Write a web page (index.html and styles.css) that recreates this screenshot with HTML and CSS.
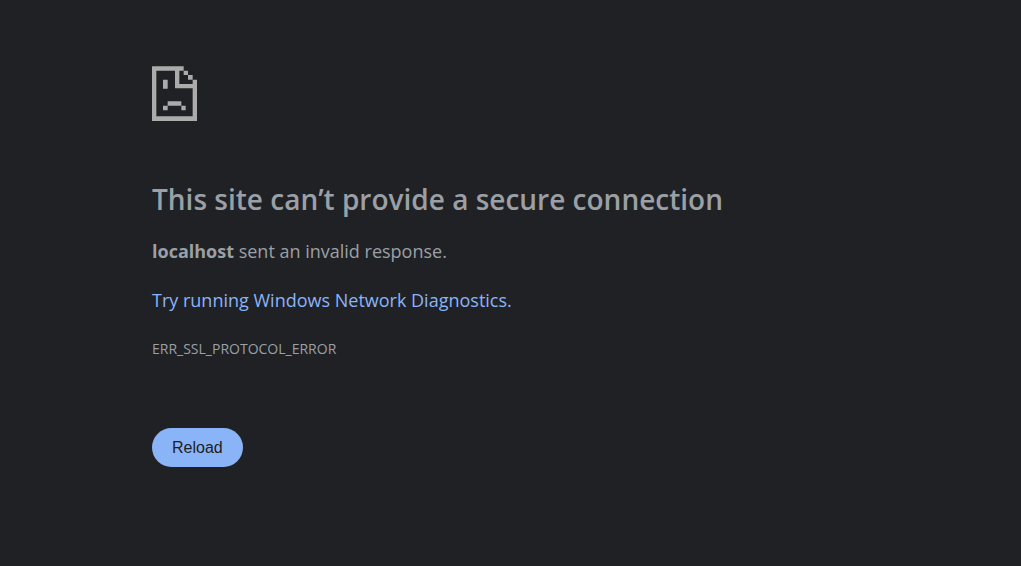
FILE: index.html
```html
<!DOCTYPE html>
<html lang="en">
<head>
    <meta charset="utf-8">
    <meta name="viewport" content="width=device-width, initial-scale=1">
    <title>localhost</title>
    <link rel="stylesheet" href="styles.css">
</head>
<body>
    <main class="error-page">
        <svg class="error-icon" viewBox="0 0 135 165" aria-hidden="true">
            <!-- page outline and folded corner -->
            <path d="M0 1H95V14H13V151H122V67H69V14H82V54H122V41H135V165H0Z"/>
            <path d="M95 14h13v13h-13zM108 27h14v14h-14z"/>
            <!-- face -->
            <path d="M33 41h14v27h-14zM47 106h41v13h13v14h-13v-14h-41v14h-14v-14h14z"/>
        </svg>

        <h1 class="error-title">This site can’t provide a secure connection</h1>
        <p class="error-text"><strong>localhost</strong> sent an invalid response.</p>
        <p class="error-text"><a class="diagnostics-link" href="#">Try running Windows Network Diagnostics</a><span class="link-end">.</span></p>
        <p class="error-code">ERR_SSL_PROTOCOL_ERROR</p>

        <button class="reload-button" type="button" onclick="location.reload()">Reload</button>
    </main>
</body>
</html>
```

FILE: styles.css
```css
body {
    margin: 0;
    background: #202124;
    color: #9aa0a6;
    font-family: "Segoe UI", "Open Sans", "Noto Sans", sans-serif;
    font-size: 18px;
    line-height: 29px;
}

.error-page {
    box-sizing: border-box;
    max-width: 717px;
    margin: 0 auto;
    padding: 66px 0 40px;
}

.error-icon {
    display: block;
    width: 45px;
    height: 55px;
    fill: #ababab;
}

.error-title {
    margin: 60px 0 20px;
    font-size: 28px;
    font-weight: 600;
    line-height: 36px;
}

.error-text {
    margin: 0 0 20px;
}

.diagnostics-link,
.link-end {
    color: #8ab4f8;
    text-decoration: none;
}

.error-code {
    margin: 0;
    font-size: 14px;
    line-height: 28px;
}

.reload-button {
    margin-top: 65px;
    padding: 10px 20px;
    border: 0;
    border-radius: 20px;
    background: #8ab4f8;
    color: #202124;
    font-family: Arial, "Liberation Sans", sans-serif;
    font-size: 16px;
    line-height: 19px;
    cursor: pointer;
}

.reload-button:hover {
    background: #aecbfa;
}
```
